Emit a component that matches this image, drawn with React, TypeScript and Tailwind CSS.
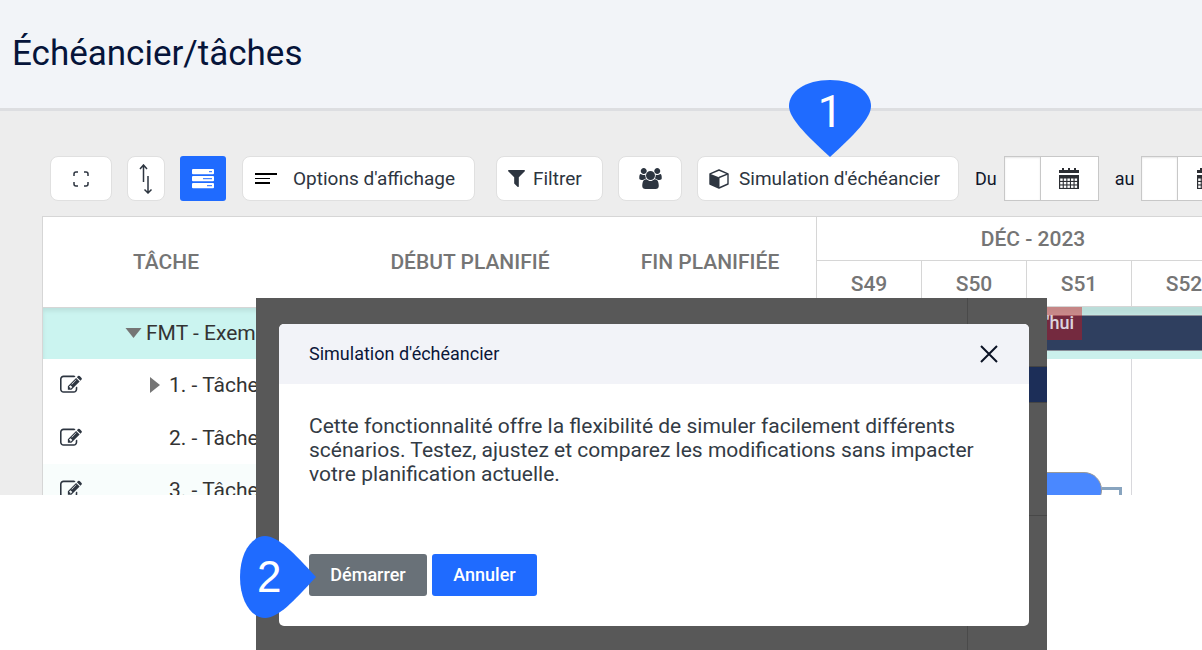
import React from "react";

type IconProps = { className?: string };

const EditIcon = ({ className }: IconProps) => (
  <svg viewBox="0 0 1792 1792" className={className} fill="currentColor" aria-hidden="true">
    <path d="M888 1184l116-116-152-152-116 116v56h96v96h56zm440-720q-16-16-33 1l-350 350q-17 17-1 33t33-1l350-350q17-17 1-33zm80 594v190q0 119-84.5 203.5t-203.5 84.5h-832q-119 0-203.5-84.5t-84.5-203.5v-832q0-119 84.5-203.5t203.5-84.5h832q63 0 117 25 15 7 18 23 3 17-9 29l-49 49q-14 14-32 8-23-6-45-6h-832q-66 0-113 47t-47 113v832q0 66 47 113t113 47h832q66 0 113-47t47-113v-126q0-13 9-22l64-64q15-15 35-7t20 29zm-96-738l288 288-672 672h-288v-288zm444 132l-92 92-288-288 92-92q28-28 68-28t68 28l152 152q28 28 28 68t-28 68z" />
  </svg>
);

const FilterIcon = ({ className }: IconProps) => (
  <svg viewBox="192 256 1408 1408" className={className} fill="currentColor" aria-hidden="true">
    <path d="M1595 295q17 41-14 70l-493 493v742q0 42-39 59-13 5-25 5-27 0-45-19l-256-256q-19-19-19-45v-486L211 365q-31-29-14-70 17-39 59-39h1280q42 0 59 39z" />
  </svg>
);

const UsersIcon = ({ className }: IconProps) => (
  <svg viewBox="0 0 1920 1792" className={className} fill="currentColor" aria-hidden="true">
    <path d="M593 896q-162 5-265 128h-134q-82 0-138-40.5t-56-118.5q0-353 124-353 6 0 43.5 21t97.5 42.5 119 21.5q67 0 133-23-5 37-5 66 0 139 81 256zm1071 637q0 120-73 189.5t-194 69.5h-874q-121 0-194-69.5t-73-189.5q0-53 3.5-103.5t14-109 26.5-108.5 43-97.5 62-81 85.5-53.5 111.5-20q10 0 43 21.5t73 48 107 48 135 21.5 135-21.5 107-48 73-48 43-21.5q61 0 111.5 20t85.5 53.5 62 81 43 97.5 26.5 108.5 14 109 3.5 103.5zm-1024-1277q0 106-75 181t-181 75-181-75-75-181 75-181 181-75 181 75 75 181zm704 384q0 159-112.5 271.5t-271.5 112.5-271.5-112.5-112.5-271.5 112.5-271.5 271.5-112.5 271.5 112.5 112.5 271.5zm576 225q0 78-56 118.5t-138 40.5h-134q-103-123-265-128 81-117 81-256 0-29-5-66 66 23 133 23 59 0 119-21.5t97.5-42.5 43.5-21q124 0 124 353zm-128-609q0 106-75 181t-181 75-181-75-75-181 75-181 181-75 181 75 75 181z" />
  </svg>
);

const CubeIcon = ({ className }: IconProps) => (
  <svg viewBox="0 0 20 20" className={className} aria-hidden="true">
    <path d="M10 1 19 4.8V15L10 19 1 15V4.800Z" fill="none" stroke="currentColor" strokeWidth="1.400" strokeLinejoin="round" />
    <path d="M1 4.800 10.500 8.500V19L1 15Z" fill="currentColor" />
    <path d="M10 8.500 19 4.800" stroke="currentColor" strokeWidth="1.400" />
  </svg>
);

const CalendarIcon = ({ className }: IconProps) => (
  <svg viewBox="0 0 20 21" className={className} aria-hidden="true">
    <path d="M0 2H3V0H5V2H9V0H11V2H15V0H17V2H20V5H0ZM0 7H20V21H0Z" fill="currentColor" />
    <g fill="white">
      {[10.5, 14, 17.5].map((y) =>
        [1.2, 4.8, 8.4, 12, 15.6].map((x) => <rect key={`${x}-${y}`} x={x} y={y} width="2.500" height="2.400" />),
      )}
    </g>
  </svg>
);

const ExpandIcon = ({ className }: IconProps) => (
  <svg viewBox="0 0 16 16" className={className} fill="none" stroke="currentColor" strokeWidth="1.500" aria-hidden="true">
    <path d="M1 5V3Q1 1 3 1H5M11 1H13Q15 1 15 3V5M15 11V13Q15 15 13 15H11M5 15H3Q1 15 1 13V11" />
  </svg>
);

const SortIcon = ({ className }: IconProps) => (
  <svg viewBox="0 0 14 30" className={className} fill="none" stroke="currentColor" strokeWidth="1.500" aria-hidden="true">
    <path d="M4.500 18V1M1 5 4.500 1 8 5M9 12V29M5.500 25.500 9 29 12.500 25.500" />
  </svg>
);

const TasksIcon = ({ className }: IconProps) => (
  <svg viewBox="0 0 22 20" className={className} aria-hidden="true">
    <g fill="white">
      <rect width="22" height="5.300" rx="1" />
      <rect y="7" width="22" height="5.300" rx="1" />
      <rect y="14" width="22" height="5.300" rx="1" />
    </g>
    <path d="M17 2.700H20M11 9.700H20M15 16.700H20" stroke="#1f6bff" strokeWidth="1" />
  </svg>
);

const LinesIcon = ({ className }: IconProps) => (
  <svg viewBox="0 0 22 12" className={className} fill="black" aria-hidden="true">
    <path d="M0 0H22V2H0ZM0 5H15V6H0ZM0 9H15V11H0Z" />
  </svg>
);

const toolButton =
  "flex h-[45px] shrink-0 items-center rounded-lg border border-[#e0e0e0] bg-white text-[19px] leading-6 text-[#2d3540]";

function DateField({ label }: { label: string }) {
  return (
    <div className="flex shrink-0 items-center gap-[7px]">
      <label htmlFor={`date-${label}`} className="text-lg text-[#10162a]">
        {label}
      </label>
      <div className="flex">
        <input
          id={`date-${label}`}
          className="h-[45px] w-[37px] border border-[#c8c8c8] bg-white shadow-[inset_0_1px_2px_#0000001a]"
        />
        <button
          aria-label={`Calendrier ${label}`}
          className="-ml-px flex h-[45px] w-[59px] items-center justify-center border border-[#c8c8c8] bg-white text-[#2c2e33]"
        >
          <CalendarIcon className="h-[21px] w-5" />
        </button>
      </div>
    </div>
  );
}

const weeks = ["S49", "S50", "S51", "S52"];

const tasks = [
  { name: "FMT - Exemple échéancier", state: "open" },
  { name: "1. - Tâche", state: "closed" },
  { name: "2. - Tâche", state: "leaf" },
  { name: "3. - Tâche", state: "leaf" },
];

const rowStyle: Record<number, string> = {
  0: "bg-[#cbf4f0] shadow-[inset_0_4px_4px_#00000014]",
  3: "bg-[#f8fdfc]",
};

function TaskTable() {
  return (
    <table className="w-[773px] shrink-0 table-fixed border-collapse bg-white text-[21px] leading-6 text-[#333]">
      <colgroup>
        <col className="w-[246px]" />
        <col className="w-[362px]" />
        <col className="w-[118px]" />
        <col />
      </colgroup>
      <thead>
        <tr className="h-[90px] border-b border-[#d6d6d6] text-[#757575]">
          <th className="p-0 font-medium">TÂCHE</th>
          <th className="p-0 font-medium">DÉBUT PLANIFIÉ</th>
          <th className="p-0 font-medium whitespace-nowrap">
            <span className="-mx-4">FIN PLANIFIÉE</span>
          </th>
          <th className="p-0" aria-label="Marge" />
        </tr>
      </thead>
      <tbody>
        {tasks.map((task, i) => (
          <tr key={task.name} className={`h-[52px] ${rowStyle[i] ?? ""}`}>
            <td className="p-0" colSpan={4}>
              <div className="flex items-center">
                <div className="flex w-[82px] pl-[17px]">
                  {i > 0 && (
                    <button aria-label={`Modifier ${task.name}`}>
                      <EditIcon className="size-[22px] text-[#2d3540]" />
                    </button>
                  )}
                </div>
                {task.state === "open" && (
                  <svg viewBox="0 0 16 10" className="mr-1 h-[10px] w-[17px]" aria-hidden="true">
                    <path d="M0 0H16L8 10Z" fill="#757575" />
                  </svg>
                )}
                {task.state !== "open" && (
                  <div className="flex w-11 pl-[25px]">
                    {task.state === "closed" && (
                      <svg viewBox="0 0 10 16" className="h-4 w-[10px]" aria-hidden="true">
                        <path d="M0 0V16L10 8Z" fill="#757575" />
                      </svg>
                    )}
                  </div>
                )}
                <span>{task.name}</span>
              </div>
            </td>
          </tr>
        ))}
      </tbody>
    </table>
  );
}

function Timeline() {
  return (
    <div className="relative w-[421px] shrink-0 border-l border-[#d6d6d6] bg-white text-[21px] leading-6 font-medium text-[#757575]">
      <div className="flex h-[44px] items-center justify-center border-b border-[#d6d6d6] pl-3">DÉC - 2023</div>
      <div className="grid h-[46px] grid-cols-4 border-b border-[#d6d6d6]">
        {weeks.map((week) => (
          <div key={week} className="flex items-center justify-center border-r border-[#d6d6d6]">
            {week}
          </div>
        ))}
      </div>
      <div className="relative h-[209px]">
        <div className="h-[52px] bg-[#cbf0ec] pt-2 shadow-[inset_0_8px_4px_#00000014]">
          <div className="h-9 border-y border-[#8a8f99] bg-[#2f3f5f]" />
        </div>
        <div className="absolute top-0 left-[160px] flex h-[33px] w-[105px] items-start justify-end bg-[#d40f136b] pt-1 pr-2 text-lg leading-6 text-[#dcd3dc]">
          Aujourd'hui
        </div>
        <div className="absolute top-[52px] left-[314px] h-full w-px bg-[#d8d8dc]" />
        <div className="absolute top-[165px] left-[160px] h-9 w-[125px] rounded-r-[18px] border border-[#999] bg-[#4a88ff]" />
        <div className="absolute top-[180px] left-[285px] h-9 w-5 border-t-3 border-r-3 border-[#88a4bf]" />
      </div>
    </div>
  );
}

function SimulationDialog() {
  return (
    <div className="absolute top-[298px] left-[256px] h-[352px] w-[791px] overflow-hidden bg-[#585858] px-[23px] pt-[26px]">
      <div className="absolute top-0 left-[711px] h-full w-px bg-[#4a4a4a]" />
      <div className="absolute top-[68px] right-0 h-[37px] w-5 border-y border-[#444] bg-[#1c2e58]" />
      <div className="absolute top-[217px] right-0 h-px w-5 bg-[#484848]" />
      <section
        role="dialog"
        aria-labelledby="dialog-title"
        className="relative w-[750px] overflow-hidden rounded-[5px] bg-white"
      >
        <header className="flex h-[60px] items-center justify-between bg-[#f2f3f8] px-[30px]">
          <h2 id="dialog-title" className="text-lg text-[#0b1638]">
            Simulation d'échéancier
          </h2>
          <button aria-label="Fermer" className="text-[#0b1225]">
            <svg viewBox="0 0 20 20" className="size-5" fill="none" stroke="currentColor" strokeWidth="2" aria-hidden="true">
              <path d="M2 2 18 18M18 2 2 18" />
            </svg>
          </button>
        </header>
        <div className="p-[30px]">
          <p className="text-[21px] leading-6 text-[#333b45]">
            Cette fonctionnalité offre la flexibilité de simuler facilement différents scénarios. Testez, ajustez et
            comparez les modifications sans impacter votre planification actuelle.
          </p>
          <div className="mt-[68px] flex gap-[5px] text-lg font-medium text-white">
            <button className="h-[42px] w-[118px] rounded-[3px] bg-[#697178]">Démarrer</button>
            <button className="h-[42px] w-[105px] rounded-[3px] bg-[#1f6bff]">Annuler</button>
          </div>
        </div>
      </section>
    </div>
  );
}

export default function App() {
  return (
    <div className="relative min-h-screen overflow-hidden bg-white font-['Roboto',sans-serif]">
      <header className="flex h-[111px] items-center border-b-3 border-[#dddee1] bg-[#f2f4f8] px-3">
        <h1 className="text-[35px] leading-10 text-[#06143a]">Échéancier/tâches</h1>
      </header>
      <main className="h-[384px] overflow-hidden bg-[#ededed] pt-[45px]">
        <div className="flex items-center gap-4 pl-[50px]">
          <div className="flex shrink-0 gap-[15px]">
            <button aria-label="Plein écran" className={`${toolButton} w-[62px] justify-center`}>
              <ExpandIcon className="size-4" />
            </button>
            <button aria-label="Trier" className={`${toolButton} w-[38px] justify-center`}>
              <SortIcon className="h-[30px] w-[14px]" />
            </button>
            <button
              aria-label="Tâches"
              className="flex h-[45px] w-[46px] items-center justify-center rounded-[3px] bg-[#1f6bff]"
            >
              <TasksIcon className="h-5 w-[22px]" />
            </button>
          </div>
          <button className={`${toolButton} mr-[5px] w-[233px] gap-4 pl-3`}>
            <LinesIcon className="h-3 w-[22px]" />
            Options d'affichage
          </button>
          <div className="flex shrink-0 gap-[15px]">
            <button className={`${toolButton} w-[107px] gap-2 pl-[11px]`}>
              <FilterIcon className="size-[17px]" />
              Filtrer
            </button>
            <button aria-label="Équipe" className={`${toolButton} w-[64px] justify-center`}>
              <UsersIcon className="h-[21px] w-[23px]" />
            </button>
            <button className={`${toolButton} w-[262px] gap-[10px] pl-[11px]`}>
              <CubeIcon className="size-5" />
              Simulation d'échéancier
            </button>
          </div>
          <DateField label="Du" />
          <DateField label="au" />
        </div>
        <div className="mt-[15px] ml-[42px] flex border-t border-l border-[#d6d6d6]">
          <TaskTable />
          <Timeline />
        </div>
      </main>

      <SimulationDialog />

      <div className="absolute top-[80px] left-[789px] flex h-[77px] w-[82px] justify-center text-[44px] text-white">
        <svg viewBox="0 0 82 77" className="absolute inset-0 size-full" aria-hidden="true">
          <path d="M41 0C66 0 82 12 82 26C82 38 66 54 41 77C16 54 0 38 0 26C0 12 16 0 41 0Z" fill="#1f6bff" />
        </svg>
        <span className="relative leading-[64px]">1</span>
      </div>
      <div className="absolute top-[536px] left-[240px] flex h-[82px] w-[76px] items-center pl-[17px] font-['Liberation_Sans',sans-serif] text-[44px] text-white">
        <svg viewBox="0 0 76 82" className="absolute inset-0 size-full" aria-hidden="true">
          <path d="M0 41C0 16 12 0 25 0C38 0 53 16 76 41C53 66 38 82 25 82C12 82 0 66 0 41Z" fill="#1f6bff" />
        </svg>
        <span className="relative">2</span>
      </div>
    </div>
  );
}
